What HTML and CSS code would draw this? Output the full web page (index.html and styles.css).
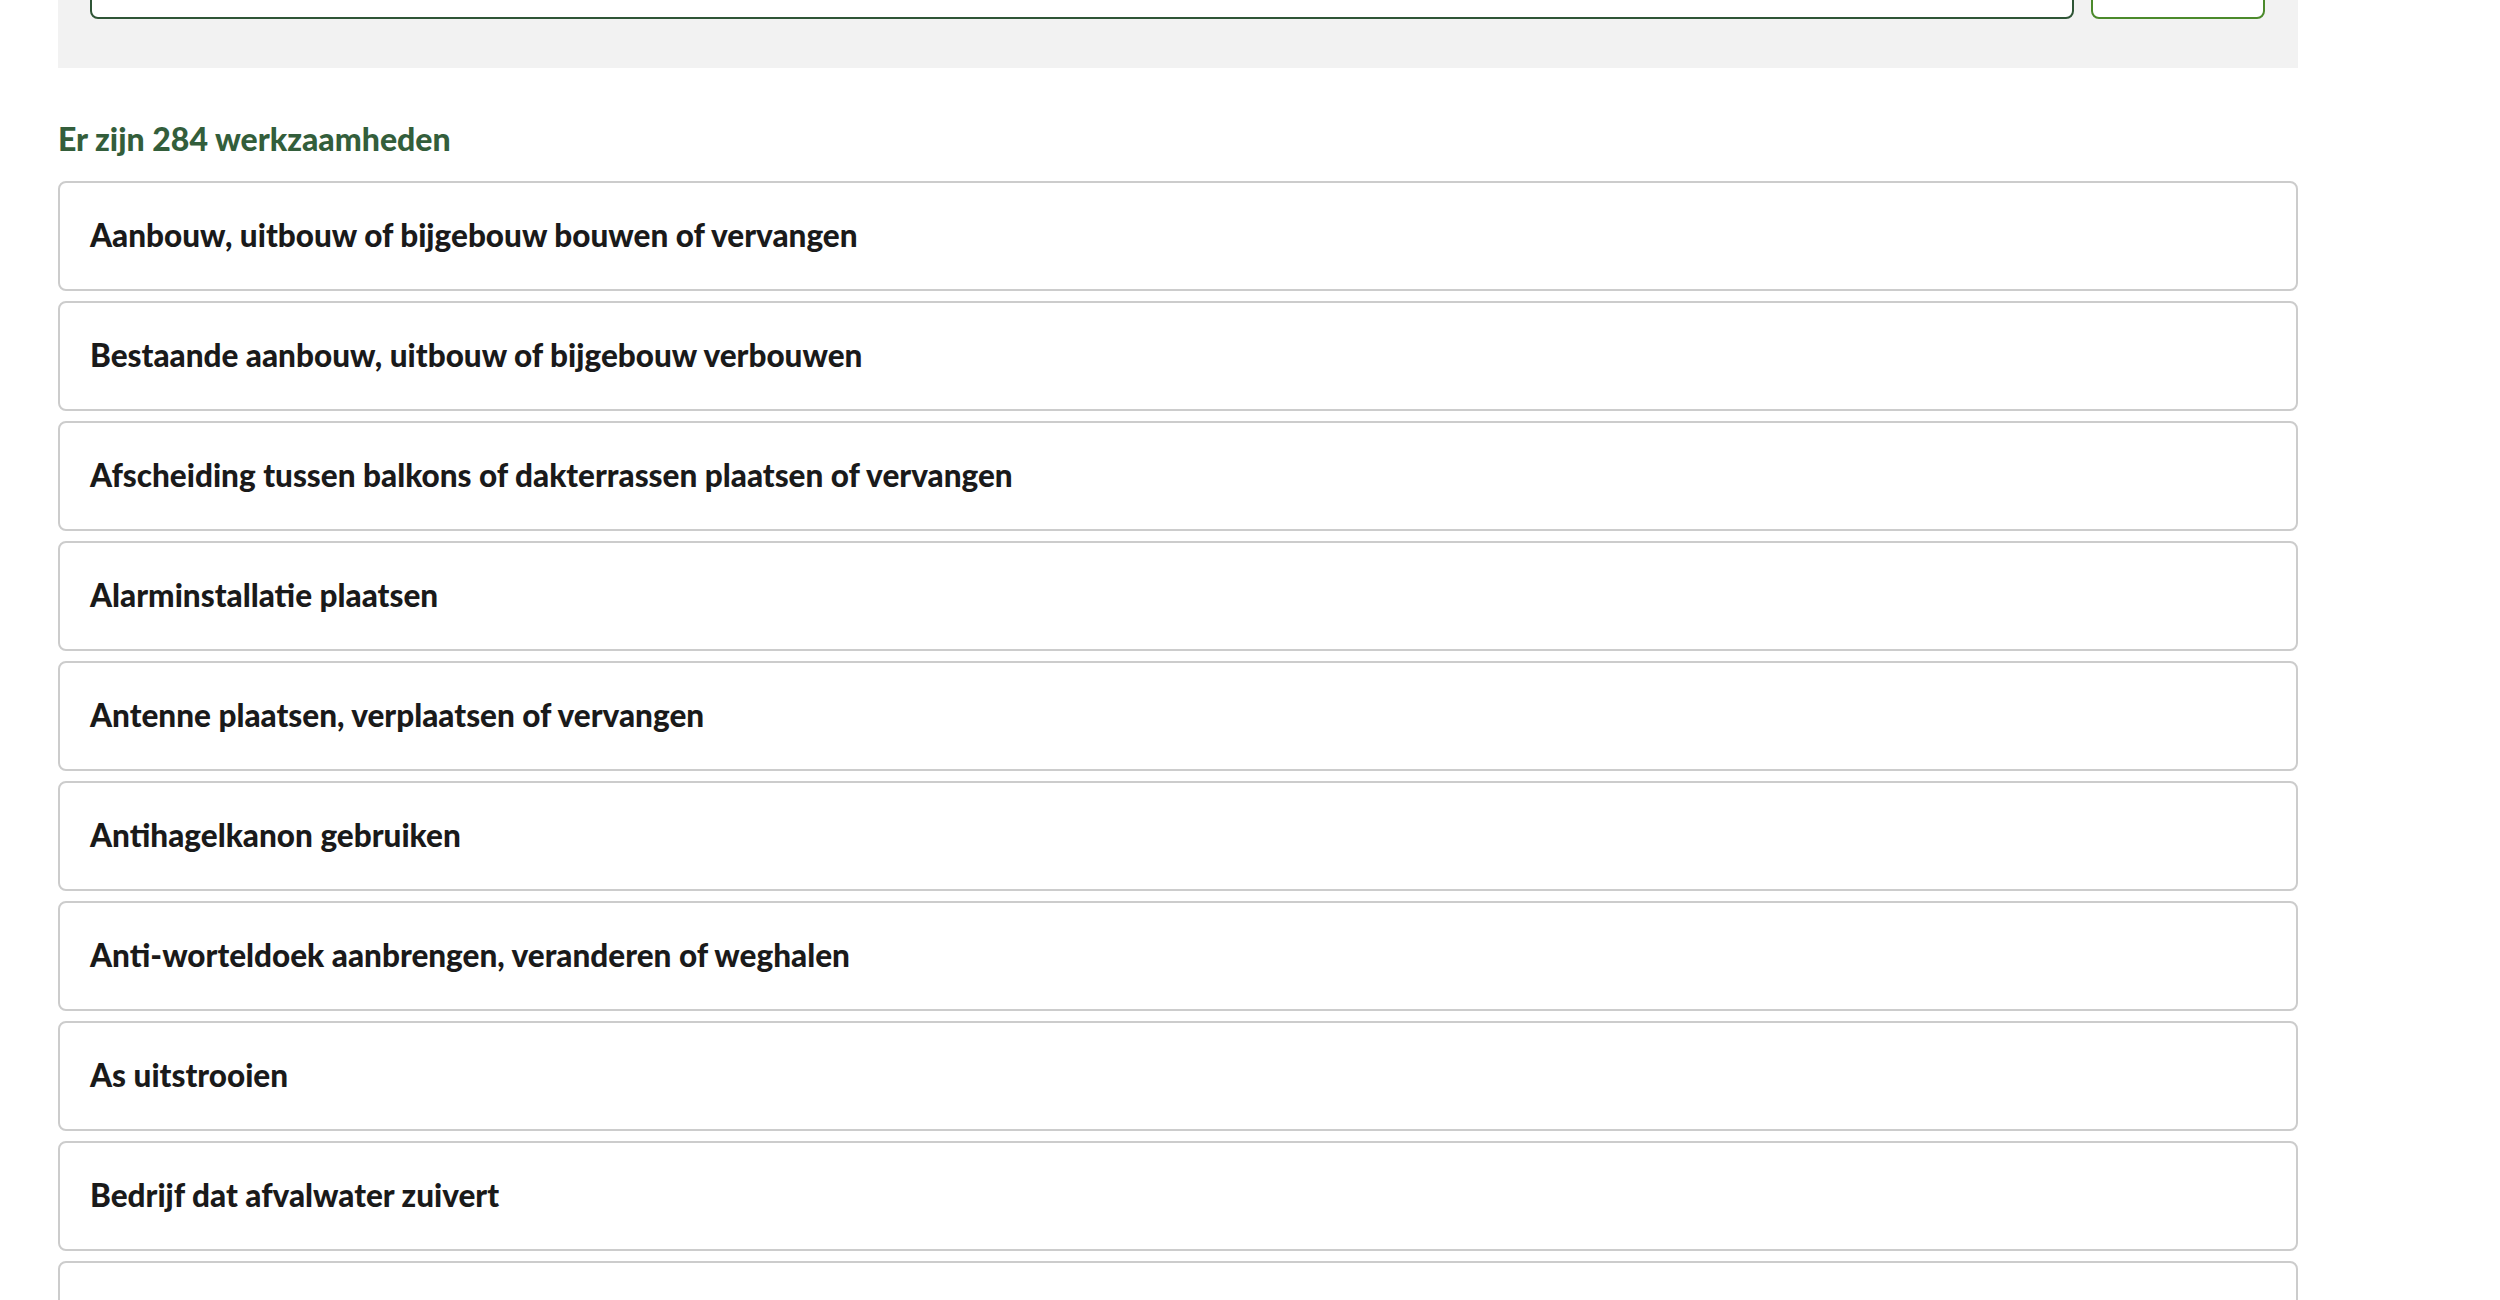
FILE: index.html
```html
<!DOCTYPE html>
<html lang="nl">
<head>
<meta charset="utf-8">
<title>Werkzaamheden</title>
<link rel="stylesheet" href="styles.css">
</head>
<body>
<div class="page">
  <form class="search-panel">
    <input class="search-input" type="text" aria-label="Zoek werkzaamheden">
    <button class="search-button" type="button">Zoeken</button>
  </form>
  <h2 class="result-count">Er zijn 284 werkzaamheden</h2>
  <ul class="activity-list">
    <li class="activity"><a class="activity-link" href="#">Aanbouw, uitbouw of bijgebouw bouwen of vervangen</a></li>
    <li class="activity"><a class="activity-link" href="#">Bestaande aanbouw, uitbouw of bijgebouw verbouwen</a></li>
    <li class="activity"><a class="activity-link" href="#">Afscheiding tussen balkons of dakterrassen plaatsen of vervangen</a></li>
    <li class="activity"><a class="activity-link" href="#">Alarminstallatie plaatsen</a></li>
    <li class="activity"><a class="activity-link" href="#">Antenne plaatsen, verplaatsen of vervangen</a></li>
    <li class="activity"><a class="activity-link" href="#">Antihagelkanon gebruiken</a></li>
    <li class="activity"><a class="activity-link" href="#">Anti-worteldoek aanbrengen, veranderen of weghalen</a></li>
    <li class="activity"><a class="activity-link" href="#">As uitstrooien</a></li>
    <li class="activity"><a class="activity-link" href="#">Bedrijf dat afvalwater zuivert</a></li>
    <li class="activity"><a class="activity-link" href="#">Bedrijf met een elektriciteitscentrale</a></li>
  </ul>
</div>
</body>
</html>
```
FILE: styles.css
```css
html, body {
  margin: 0;
  padding: 0;
  background: #ffffff;
}
body {
  font-family: Lato, "Open Sans", "Liberation Sans", sans-serif;
  color: #1a1a1a;
  overflow: hidden;
}
.page {
  width: 2240px;
  padding-left: 58px;
}
.search-panel {
  display: flex;
  gap: 17px;
  margin-top: -93px;
  padding: 32px 33px 49px 32px;
  background: #f2f2f2;
}
.search-input {
  flex: 1;
  height: 80px;
  box-sizing: border-box;
  border: 2px solid #2f5536;
  border-radius: 8px;
  background: #ffffff;
  margin: 0;
}
.search-button {
  width: 174px;
  height: 80px;
  box-sizing: border-box;
  border: 2px solid #4b8a2b;
  border-radius: 8px;
  background: #ffffff;
  color: #4b8a2b;
  font: 700 20px Lato, sans-serif;
  line-height: 24px;
  padding: 0;
  margin: 0;
}
.result-count {
  margin: 51px 0 0 0;
  font-size: 32px;
  line-height: 40px;
  font-weight: 900;
  color: #335e3b;
}
.activity-list {
  list-style: none;
  margin: 22px 0 0 0;
  padding: 0;
  display: flex;
  flex-direction: column;
  gap: 10px;
}
.activity {
  margin: 0;
}
.activity-link {
  display: flex;
  align-items: center;
  box-sizing: border-box;
  height: 110px;
  padding: 0 30px 2px 30px;
  border: 2px solid #cccccc;
  border-radius: 8px;
  background: #ffffff;
  color: #1a1a1a;
  text-decoration: none;
  font-size: 31.5px;
  font-weight: 900;
  line-height: 36px;
}
```
